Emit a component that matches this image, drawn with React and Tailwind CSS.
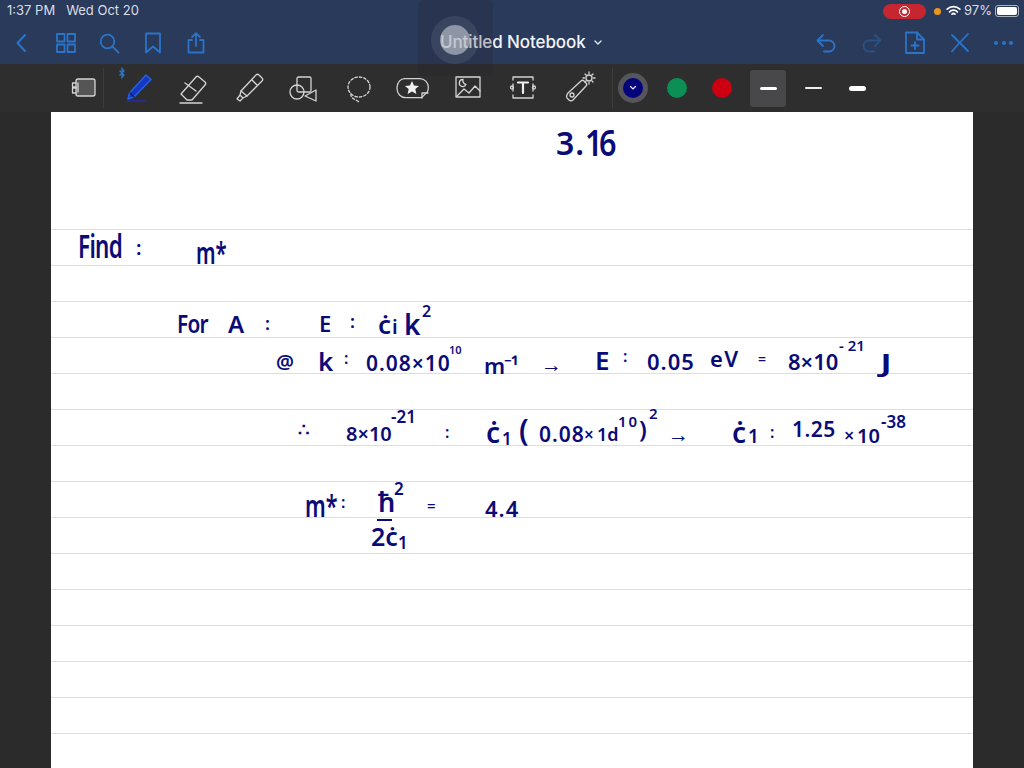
import React from "react";

const ink = [
  ["3.", "left-[556px] top-[127px] text-[32px] tracking-[1px]"],
  ["16", "left-[585px] top-[125px] text-[36px] tracking-[-4px] scale-x-[.85] origin-left"],
  ["Find", "left-[78px] top-[229px] text-[33px] tracking-[-1px] scale-x-[.68] origin-left"],
  [":", "left-[136px] top-[238px] text-[20px]"],
  ["m*", "left-[196px] top-[238px] text-[30px] scale-x-[.68] origin-left"],
  ["For", "left-[177px] top-[310px] text-[26px] tracking-[-1px] scale-x-[.8] origin-left"],
  ["A", "left-[228px] top-[312px] text-[24px]"],
  [":", "left-[265px] top-[314px] text-[18px]"],
  ["E", "left-[319px] top-[312px] text-[22px]"],
  [":", "left-[350px] top-[312px] text-[18px]"],
  ["ċ", "left-[378px] top-[311px] text-[26px]"],
  ["i", "left-[392px] top-[317px] text-[20px]"],
  ["k", "left-[404px] top-[310px] text-[28px]"],
  ["2", "left-[422px] top-[303px] text-[16px]"],
  ["@", "left-[276px] top-[352px] text-[20px]"],
  ["k", "left-[318px] top-[348px] text-[26px]"],
  [":", "left-[344px] top-[350px] text-[16px]"],
  ["0.08×10", "left-[366px] top-[353px] text-[21px] tracking-[1px]"],
  ["10", "left-[449px] top-[344px] text-[11px]"],
  ["m⁻¹", "left-[484px] top-[354px] text-[22px] tracking-[-1px]"],
  ["→", "left-[541px] top-[354px] text-[21px] font-bold"],
  ["E", "left-[595px] top-[347px] text-[26px]"],
  [":", "left-[623px] top-[348px] text-[16px]"],
  ["0.05", "left-[647px] top-[350px] text-[22px] tracking-[1px]"],
  ["eV", "left-[710px] top-[347px] text-[22px] tracking-[1.5px]"],
  ["=", "left-[758px] top-[352px] text-[14px]"],
  ["8×10", "left-[788px] top-[350px] text-[22px]"],
  ["- 21", "left-[839px] top-[338px] text-[15px]"],
  ["J", "left-[880px] top-[349px] text-[26px] scale-x-150 origin-left"],
  ["∴", "left-[298px] top-[420px] text-[18px]"],
  ["8×10", "left-[346px] top-[424px] text-[20px]"],
  ["-21", "left-[391px] top-[408px] text-[17px]"],
  [":", "left-[445px] top-[424px] text-[16px]"],
  ["ċ", "left-[486px] top-[418px] text-[28px]"],
  ["1", "left-[502px] top-[430px] text-[17px]"],
  ["(", "left-[519px] top-[415px] text-[30px]"],
  ["0.08", "left-[539px] top-[424px] text-[21px] tracking-[1px]"],
  ["×", "left-[584px] top-[426px] text-[17px]"],
  ["1d", "left-[597px] top-[425px] text-[18px]"],
  ["10", "left-[618px] top-[414px] text-[15px] tracking-[2px]"],
  [")", "left-[639px] top-[417px] text-[24px]"],
  ["2", "left-[649px] top-[406px] text-[15px]"],
  ["→", "left-[668px] top-[424px] text-[21px] font-bold"],
  ["ċ", "left-[732px] top-[418px] text-[28px]"],
  ["1", "left-[748px] top-[427px] text-[19px]"],
  [":", "left-[770px] top-[424px] text-[16px]"],
  ["1.25", "left-[792px] top-[419px] text-[21px] tracking-[.5px]"],
  ["×", "left-[844px] top-[426px] text-[18px]"],
  ["10", "left-[857px] top-[426px] text-[20px]"],
  ["-38", "left-[881px] top-[413px] text-[17px]"],
  ["m*", "left-[305px] top-[491px] text-[30px] scale-x-[.72] origin-left"],
  [":", "left-[341px] top-[494px] text-[16px]"],
  ["ħ", "left-[378px] top-[488px] text-[27px]"],
  ["2", "left-[394px] top-[480px] text-[17px]"],
  ["=", "left-[427px] top-[498px] text-[15px]"],
  ["4.4", "left-[485px] top-[497px] text-[22px] tracking-[1px]"],
  ["2ċ", "left-[371px] top-[524px] text-[25px]"],
  ["1", "left-[398px] top-[534px] text-[17px]"],
];

const B = "#2a74c9";

function NavIcon({ children, w = 24, className = "" }) {
  return (
    <svg width={w} height="24" viewBox={`0 0 ${w} 24`} fill="none" stroke={B} strokeWidth="1.8" strokeLinecap="round" strokeLinejoin="round" className={className}>
      {children}
    </svg>
  );
}

function Tool({ children, className = "" }) {
  return (
    <div className={`w-[40px] h-[40px] shrink-0 flex items-center justify-center ${className}`}>
      <svg width="36" height="36" viewBox="0 0 36 36" fill="none" stroke="#d4d4d4" strokeWidth="1.3" strokeLinecap="round" strokeLinejoin="round">
        {children}
      </svg>
    </div>
  );
}

export default function App() {
  return (
    <div className="relative w-[1024px] h-[768px] overflow-hidden bg-[#2b2b2b] flex flex-col font-['Liberation_Sans',sans-serif]">
      <header className="relative h-[64px] shrink-0 bg-[#2a3a5b] flex flex-col">
        <div className="h-[22px] flex items-center justify-between pl-[7px] pr-[5px] text-[13px] text-[#d9dee8] font-['Inter',sans-serif]">
          <div className="flex gap-[11px]">
            <span>1:37 PM</span>
            <span>Wed Oct 20</span>
          </div>
          <div className="flex items-center">
            <div className="w-[43px] h-[15px] rounded-full bg-[#c5262f] flex items-center justify-center">
              <div className="w-[11px] h-[11px] rounded-full border-[1.5px] border-white flex items-center justify-center">
                <div className="w-[5px] h-[5px] rounded-full bg-white" />
              </div>
            </div>
            <div className="ml-[8px] w-[7px] h-[7px] rounded-full bg-[#e8981e]" />
            <svg width="15" height="12" viewBox="0 0 15 12" className="ml-[5px]" fill="none" stroke="#ffffff" strokeWidth="1.7" strokeLinecap="round">
              <path d="M1.2 4.2a9 9 0 0 1 12.6 0" />
              <path d="M3.6 6.8a5.6 5.6 0 0 1 7.8 0" />
              <path d="M6 9.2a2.2 2.2 0 0 1 3 0" />
            </svg>
            <span className="ml-[3px]">97%</span>
            <div className="ml-[3px] w-[24px] h-[12px] rounded-[3px] border border-[#aab2c0] p-[1px]">
              <div className="w-full h-full rounded-[2px] bg-white" />
            </div>
          </div>
        </div>
        <div className="relative flex-1 flex items-center justify-between">
          <div className="flex items-center text-[0px]">
            <NavIcon w={14} className="ml-[14px]"><path d="M11 4 3.5 12l7.5 8" strokeWidth="2" /></NavIcon>
            <NavIcon className="ml-[26px]"><rect x="3" y="3" width="7.5" height="7.5" /><rect x="13.5" y="3" width="7.5" height="7.5" /><rect x="3" y="13.5" width="7.5" height="7.5" /><rect x="13.5" y="13.5" width="7.5" height="7.5" /></NavIcon>
            <NavIcon className="ml-[19px]"><circle cx="10.5" cy="10.5" r="6.8" /><path d="m15.5 15.5 6 6.2" /></NavIcon>
            <NavIcon className="ml-[20px]"><path d="M5 2.5h14v19l-7-6-7 6z" /></NavIcon>
            <NavIcon className="ml-[19px]"><path d="M8 9H4.5v12.5h15V9H16" /><path d="M12 15V2.5M8 6l4-3.8L16 6" /></NavIcon>
          </div>
          <div className="absolute left-[440px] top-[10px] flex items-center text-[17px] leading-[20px] font-medium text-[#f2f4f8] font-['Inter',sans-serif] whitespace-nowrap tracking-[-.1px]">
            Untitled Notebook
            <svg width="10" height="8" viewBox="0 0 10 8" className="ml-[7px] mt-[1px]" fill="none" stroke="#dfe3ea" strokeWidth="1.4" strokeLinecap="round"><path d="m2 2 3 3 3-3" /></svg>
          </div>
          <div className="flex items-center mr-[11px]">
            <NavIcon><path d="M8 4 2.5 9.5 8 15" /><path d="M3 9.5h11a5.5 5.5 0 0 1 0 11H9" /></NavIcon>
            <NavIcon className="ml-[20px] opacity-40"><path d="m16 4 5.5 5.5L16 15" /><path d="M21 9.5H10a5.5 5.5 0 0 0 0 11h5" /></NavIcon>
            <NavIcon className="ml-[20px]"><path d="M3 1.5h11l7 7V22H3z" /><path d="M14 1.5v7h7M12 11v7M8.5 14.5h7" /></NavIcon>
            <NavIcon className="ml-[21px]"><path d="m4 4 16 16" /><path d="M20 3 9 14.5 4 20.5" /></NavIcon>
            <div className="ml-[22px] flex gap-[3.5px]">
              <div className="w-[4px] h-[4px] rounded-full bg-[#2a74c9]" />
              <div className="w-[4px] h-[4px] rounded-full bg-[#2a74c9]" />
              <div className="w-[4px] h-[4px] rounded-full bg-[#2a74c9]" />
            </div>
          </div>
        </div>
      </header>

      <div className="h-[48px] shrink-0 bg-[#2e2e2e] flex items-center pl-[63px]">
        <Tool>
          <rect x="11" y="9" width="19" height="17" rx="2" fill="#555" />
          <path d="M11 13H7.5v4H11M11 18H7.5v5H11" />
          <path d="M13 13v9" />
        </Tool>
        <div className="w-px h-[40px] bg-[#3c3c3c]" />
        <div className="relative ml-[15px]">
          <Tool>
            <path d="M6 31h18" stroke="#1b2fb0" strokeWidth="1.6" />
            <path d="M7 29l1.5-6L25 5l5 4.5L13 27z" fill="#1736c4" stroke="#2563d8" strokeWidth="1.5" />
            <path d="M9 23l4 4" stroke="#0b1a80" />
          </Tool>
          <svg width="8" height="12" viewBox="0 0 8 12" fill="none" stroke="#2a74c9" strokeWidth="1.3" className="absolute left-[-1px] top-[-1px]"><path d="M1.5 3.5 6 8 4 10.5V1.5L6 4 1.5 8.5" /></svg>
        </div>
        <Tool className="ml-[13px]">
          <path d="M7 24 22 7c1-1 2-1 3 0l6 5c1 1 1 2 0 3L18 30h-5z" />
          <path d="m12 18 11 8" transform="translate(-1 -5)" />
          <path d="M6 33h22" />
        </Tool>
        <Tool className="ml-[16px]">
          <path d="M11 21 26 5c1-1 2-1 3 0l3 3c1 1 1 2 0 3L17 26z" />
          <path d="m11 21-1 4 3 3 4-2M10 25l-3 4 3 2 3-3" />
          <path d="m22 10 5 5" />
        </Tool>
        <Tool className="ml-[15px]">
          <rect x="12" y="7" width="14" height="15" rx="1.5" />
          <circle cx="12" cy="22" r="7" />
          <path d="M31 20 20 26l11 5z" />
        </Tool>
        <Tool className="ml-[16px]">
          <ellipse cx="18" cy="17" rx="11" ry="10" strokeDasharray="2.5 2" />
          <path d="M10 24c-1 4 4 5 8 8" strokeDasharray="2.5 2" />
        </Tool>
        <Tool className="ml-[14px]">
          <path d="M9 8h16c5 0 9 4 9 9 0 2-.5 4-1 5l-6 6H10c-5 0-9-4-9-10s4-10 8-10z" transform="translate(1 1) scale(.95)" />
          <path d="M27 28v-5h6" />
          <path d="m17 11 2 4.5 5 .4-3.7 3.2 1.1 4.9-4.4-2.6-4.4 2.6 1.1-4.9L9.9 15.900l5-.4z" fill="#f0f0f0" stroke="none" />
        </Tool>
        <Tool className="ml-[15px]">
          <rect x="6" y="7" width="24" height="20" />
          <path d="m7 26 7-7 5 4 6-7 5 5" />
          <path d="M13 9.5a3.5 3.5 0 1 0 3 5 4 4 0 0 1-3-5z" />
        </Tool>
        <Tool className="ml-[15px]">
          <path d="M8 7h20v3M28 14v7M28 25v3H8v-3M8 21v-7M8 10V7" />
          <circle cx="7" cy="17.5" r="1.5" />
          <circle cx="29" cy="17.5" r="1.5" />
          <path d="M13 12.5h10M18 12.5V23" strokeWidth="2.2" stroke="#eeeeee" />
        </Tool>
        <Tool className="ml-[16px]">
          <path d="M7 23 20 11c1-1 2-1 3 0l2 2c1 1 1 2 0 3L12 30c-1 1-3 1-4 0l-2-2c-1-1 0-4 1-5z" />
          <circle cx="11" cy="25" r="2" />
          <circle cx="28" cy="8" r="3" />
          <path d="M28 2v1.5M28 12.5V14M22 8h1.5M32.500 8H34M24 4l1 1M31 11l1 1M32 4l-1 1M24 12l1-1" />
        </Tool>
        <div className="ml-[13px] w-px h-[40px] bg-[#3c3c3c]" />
        <div className="w-[40px] h-[40px] flex items-center justify-center">
          <div className="w-[30px] h-[30px] rounded-full bg-[#55555b] flex items-center justify-center">
            <div className="w-[20px] h-[20px] rounded-full bg-[#03037c] flex items-center justify-center">
              <svg width="8" height="6" viewBox="0 0 8 6" fill="none" stroke="#e6e6f5" strokeWidth="1.2" strokeLinecap="round"><path d="m1.5 1.5 2.5 2.5 2.5-2.500" /></svg>
            </div>
          </div>
        </div>
        <div className="ml-[4px] w-[40px] h-[40px] flex items-center justify-center">
          <div className="w-[20px] h-[20px] rounded-full bg-[#0b8f55]" />
        </div>
        <div className="ml-[5px] w-[40px] h-[40px] flex items-center justify-center">
          <div className="w-[20px] h-[20px] rounded-full bg-[#cc0010]" />
        </div>
        <div className="ml-[8px] w-[36px] h-[37px] rounded-[3px] bg-[#48484a] flex items-center justify-center">
          <div className="w-[17px] h-[3px] rounded-full bg-white" />
        </div>
        <div className="ml-[7px] w-[40px] h-[40px] flex items-center justify-center">
          <div className="w-[17px] h-[2px] rounded-full bg-[#eeeeee]" />
        </div>
        <div className="ml-[4px] w-[40px] h-[40px] flex items-center justify-center">
          <div className="w-[17px] h-[5px] rounded-full bg-white" />
        </div>
      </div>

      <main className="flex-1 min-h-0 px-[51px]">
        <div className="w-[922px] h-full bg-white pt-[117px] flex flex-col">
          {Array.from({ length: 15 }).map((_, i) => (
            <div key={i} className="h-[36px] shrink-0 border-t border-[#dedede]" />
          ))}
        </div>
      </main>

      <div className="absolute inset-0 pointer-events-none text-[#0b0b78] font-['Noto_Sans',sans-serif] font-semibold">
        {ink.map(([t, c], i) => (
          <span key={i} className={`absolute leading-none whitespace-nowrap ${c}`}>{t}</span>
        ))}
        <div className="absolute left-[377px] top-[519px] w-[15px] h-[2px] bg-[#0b0b78]" />
      </div>

      <div className="absolute left-[418px] top-0 w-[75px] h-[76px] rounded-[6px] bg-[#25252f]/25 pointer-events-none" />
      <div className="absolute left-[431px] top-[16px] w-[48px] h-[48px] rounded-full bg-[#d8dbe4]/10 pointer-events-none" />
      <div className="absolute left-[440px] top-[25px] w-[30px] h-[30px] rounded-full bg-[#c8ccd6]/60 pointer-events-none" />
    </div>
  );
}
